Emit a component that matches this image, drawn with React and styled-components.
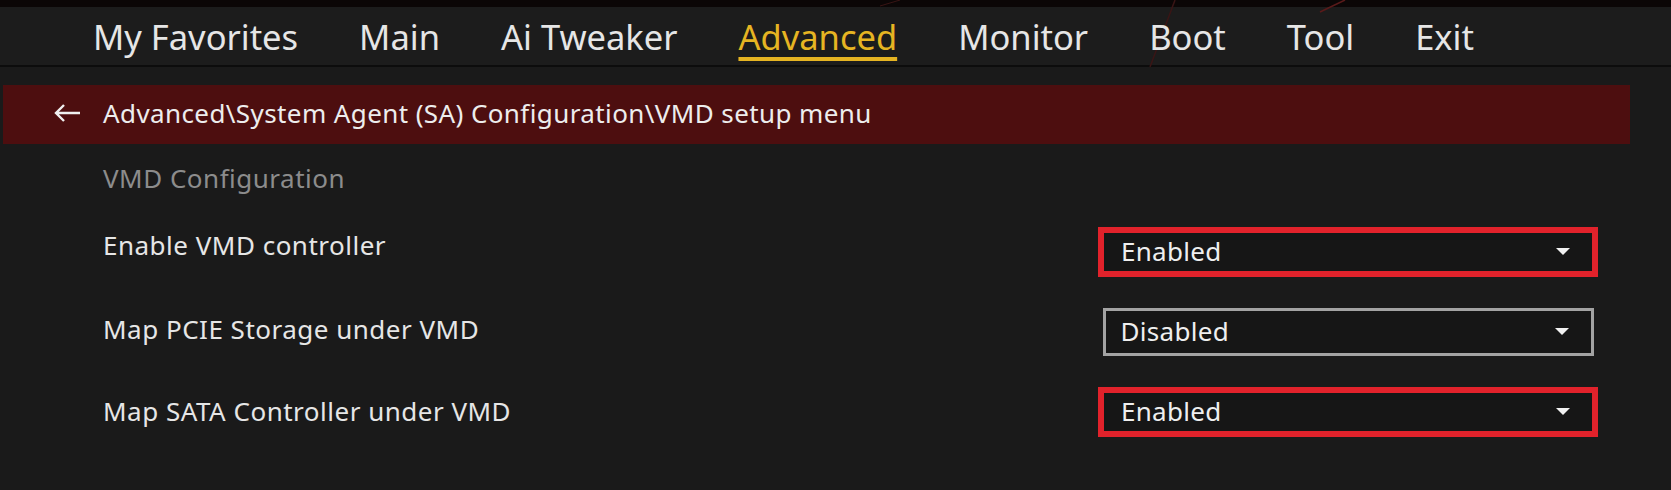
import styled, { createGlobalStyle } from "styled-components";

const GlobalStyle = createGlobalStyle`
  html, body {
    margin: 0;
    padding: 0;
    background: #1a1a1a;
  }
  body {
    font-family: "Noto Sans", "Open Sans", sans-serif;
  }
`;

const Page = styled.div`
  width: 1671px;
  height: 490px;
  background: #1a1a1a;
  overflow: hidden;
  position: relative;
`;

const TopStrip = styled.div`
  height: 7px;
  background: #0b0606;
`;

const NavBar = styled.nav`
  position: relative;
  height: 60px;
  background: #1c1c1c;
  border-bottom: 2px solid #0c0c0c;
  display: flex;
  align-items: center;
  gap: 61px;
  padding: 2px 0 0 93px;
  box-sizing: border-box;
`;

const Streaks = styled.svg`
  position: absolute;
  top: -7px;
  left: 0;
  width: 1671px;
  height: 67px;
  pointer-events: none;
`;

const NavItem = styled.span`
  position: relative;
  font-size: 34.5px;
  line-height: 1;
  color: ${(p) => (p.active ? "#e6b422" : "#e6e6e6")};
  text-decoration: ${(p) => (p.active ? "underline" : "none")};
  text-decoration-thickness: 4px;
  text-underline-offset: 7px;
`;

const Content = styled.main`
  padding: 18px 41px 0 3px;
`;

const Breadcrumb = styled.div`
  height: 59px;
  background: #4d0e0f;
  display: flex;
  align-items: center;
  padding: 0 0 3px 50px;
  box-sizing: border-box;
  gap: 22px;
  color: #ededed;
  font-size: 26px;
  letter-spacing: 0.4px;
`;

const BackIcon = styled.svg`
  width: 28px;
  height: 20px;
  flex: none;
`;

const Section = styled.section`
  padding-left: 100px;
`;

const SectionTitle = styled.div`
  height: 68px;
  display: flex;
  align-items: center;
  color: #8c8c8c;
  font-size: 26px;
  letter-spacing: 0.5px;
`;

const Row = styled.div`
  height: 80px;
  display: flex;
  align-items: center;
  padding-right: 22px;
`;

const Label = styled.div`
  flex: 1;
  color: #e6e6e6;
  font-size: 26px;
  letter-spacing: 0.5px;
  padding-bottom: ${(p) => p.lift}px;
`;

const SelectCol = styled.div`
  width: 520px;
  display: flex;
  justify-content: center;
`;

const Select = styled.div`
  box-sizing: border-box;
  width: ${(p) => (p.highlight ? "500px" : "491px")};
  height: ${(p) => (p.highlight ? "50px" : "48px")};
  border: ${(p) => (p.highlight ? "6px solid #e1222b" : "3px solid #a3a3a3")};
  background: #161616;
  display: flex;
  align-items: center;
  justify-content: space-between;
  padding: 0 22px 2px ${(p) => (p.highlight ? "17px" : "15px")};
  color: #efefef;
  font-size: 26px;
  letter-spacing: 0.3px;
`;

const Caret = styled.span`
  width: 0;
  height: 0;
  border-left: 7px solid transparent;
  border-right: 7px solid transparent;
  border-top: 7px solid #f2f2f2;
`;

const tabs = [
  "My Favorites",
  "Main",
  "Ai Tweaker",
  "Advanced",
  "Monitor",
  "Boot",
  "Tool",
  "Exit",
];

const options = [
  { label: "Enable VMD controller", value: "Enabled", highlight: true, lift: 14 },
  { label: "Map PCIE Storage under VMD", value: "Disabled", highlight: false, lift: 6 },
  { label: "Map SATA Controller under VMD", value: "Enabled", highlight: true, lift: 2 },
];

export default function App() {
  return (
    <Page>
      <GlobalStyle />
      <TopStrip />
      <NavBar>
        <Streaks viewBox="0 0 1671 67">
          <line x1="1150" y1="67" x2="1175" y2="0" stroke="#3a1515" strokeWidth="1.5" />
          <line x1="1320" y1="12" x2="1345" y2="0" stroke="#5a1a1a" strokeWidth="1.5" />
          <line x1="880" y1="6" x2="900" y2="0" stroke="#3a1414" strokeWidth="1" />
        </Streaks>
        {tabs.map((t) => (
          <NavItem key={t} active={t === "Advanced"}>
            {t}
          </NavItem>
        ))}
      </NavBar>
      <Content>
        <Breadcrumb>
          <BackIcon viewBox="0 0 28 20">
            <path
              d="M27 10H3M11 2L3 10l8 8"
              fill="none"
              stroke="#f0f0f0"
              strokeWidth="2.4"
            />
          </BackIcon>
          <span>Advanced\System Agent (SA) Configuration\VMD setup menu</span>
        </Breadcrumb>
        <Section>
          <SectionTitle>VMD Configuration</SectionTitle>
          {options.map((o) => (
            <Row key={o.label}>
              <Label lift={o.lift}>{o.label}</Label>
              <SelectCol>
                <Select highlight={o.highlight}>
                  <span>{o.value}</span>
                  <Caret />
                </Select>
              </SelectCol>
            </Row>
          ))}
        </Section>
      </Content>
    </Page>
  );
}
